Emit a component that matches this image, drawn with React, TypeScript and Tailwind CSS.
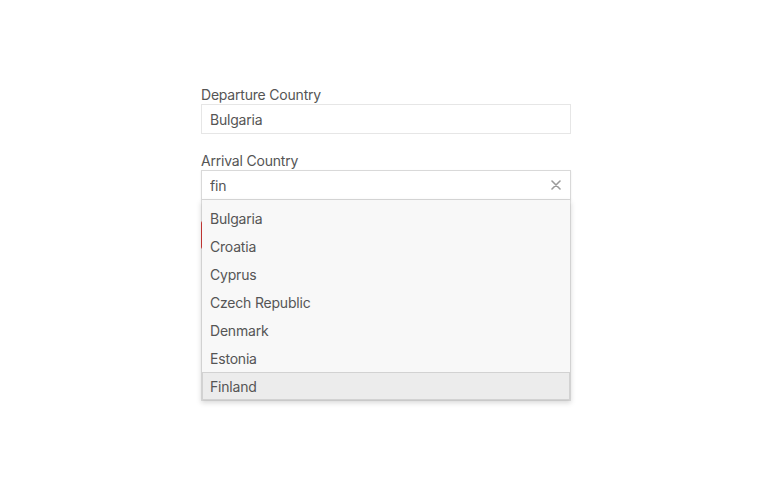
import { useState } from 'react'

const COUNTRIES = ['Bulgaria', 'Croatia', 'Cyprus', 'Czech Republic', 'Denmark', 'Estonia', 'Finland']

/**
 * Departure / arrival form. The arrival field is mid-search, so its option
 * list is open and overlaps the submit button underneath it.
 */
export default function App() {
  const [query, setQuery] = useState('fin')
  const active = 'Finland'

  return (
    <div
      className="min-h-[497px] w-full bg-white text-[#555] tracking-[-0.2px]"
      style={{ fontFamily: 'Inter, "Liberation Sans", sans-serif' }}
    >
      <div className="ml-[201px] w-[370px] pt-[86px]">
        <label className="block text-[14px] leading-[18px] text-[#555]">Departure Country</label>
        <div className="flex h-[30px] items-center border border-[#e6e6e6] bg-white pl-[8px] text-[14px] text-[#555]">
          Bulgaria
        </div>

        <label className="mt-[18px] block text-[14px] leading-[18px] text-[#555]">Arrival Country</label>
        <div className="relative">
          <div className="flex h-[30px] items-center border border-[#d9d9d9] bg-white pl-[8px] pr-[6px] shadow-[0_1px_2px_rgba(0,0,0,0.08)]">
            <input
              value={query}
              onChange={(e) => setQuery(e.target.value)}
              className="min-w-0 flex-1 bg-transparent text-[14px] tracking-[-0.2px] text-[#555] outline-none"
            />
            <button type="button" aria-label="Clear" className="grid h-4 w-4 place-items-center text-[#9a9a9a]">
              <svg width="10" height="10" viewBox="0 0 10 10" aria-hidden>
                <path d="M1 1 L9 9 M9 1 L1 9" stroke="currentColor" strokeWidth="1.6" strokeLinecap="round" />
              </svg>
            </button>
          </div>

          {/* translucent border + padding-box bg lets the red button's edge show, as in the shot */}
          <ul className="absolute left-0 top-[30px] z-10 w-full border border-t-0 border-[rgba(0,0,0,0.1)] bg-[#f8f8f8] bg-clip-padding pt-[4px] shadow-[0_2px_5px_rgba(0,0,0,0.15)]">
            {COUNTRIES.map((c) => (
              <li
                key={c}
                className={
                  c === active
                    ? 'flex h-[28px] items-center border border-[#d2d2d2] bg-[#ececec] pl-[7px] text-[14px] text-[#555]'
                    : 'flex h-[28px] items-center pl-[8px] text-[14px] text-[#555]'
                }
              >
                {c}
              </li>
            ))}
          </ul>

          {/* submit sits under the open list; only its left edge shows */}
          <button
            type="button"
            aria-label="Search"
            className="mt-[21px] block h-[28px] w-[120px] rounded-[2px] bg-[#e8403c]"
          />
        </div>
      </div>
    </div>
  )
}
